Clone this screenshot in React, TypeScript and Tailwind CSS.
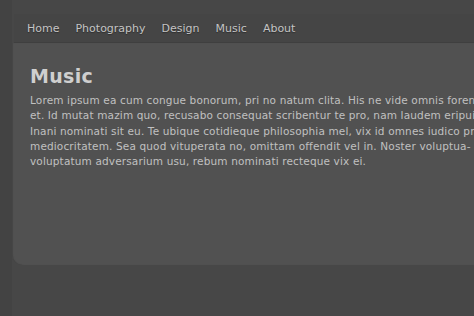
import React from 'react';

const navItems = ['Home', 'Photography', 'Design', 'Music', 'About'];

const lines = [
  'Lorem ipsum ea cum congue bonorum, pri no natum clita. His ne vide omnis forensibus, nam ea',
  'et. Id mutat mazim quo, recusabo consequat scribentur te pro, nam laudem eripuit',
  'Inani nominati sit eu. Te ubique cotidieque philosophia mel, vix id omnes iudico prompta',
  'mediocritatem. Sea quod vituperata no, omittam offendit vel in. Noster voluptua-',
  'voluptatum adversarium usu, rebum nominati recteque vix ei.',
];

export default function App() {
  return (
    <div
      className="h-[316px] w-[474px] overflow-hidden bg-[#474747]"
      style={{ fontFamily: '"DejaVu Sans", sans-serif' }}
    >
      <div className="flex h-full">
        {/* left dark strip */}
        <div className="w-[12px] shrink-0 bg-[#434343]" />
        <div className="flex flex-1 flex-col pt-[14px]">
          {/* nav bar */}
          <nav className="ml-[2px] flex h-[29px] items-center gap-[16px] border-b border-[#3f3f3f] bg-[#454545] pl-[13px] pt-[2px] text-[11px] text-[#c4c4c4] [text-shadow:0_1px_1px_rgba(0,0,0,0.35)]">
            {navItems.map((item) => (
              <span key={item}>{item}</span>
            ))}
          </nav>
          {/* content panel */}
          <div className="h-[222px] w-[560px] rounded-bl-[10px] bg-[#515151] pl-[18px] pt-[22px] shadow-[inset_1px_0_1px_rgba(0,0,0,0.15)]">
            <h1 className="text-[19px] font-bold leading-[22px] tracking-[0.3px] text-[#cfcfcf]">Music</h1>
            <div className="mt-[6px] text-[10.5px] leading-[15.25px] tracking-[0.15px] text-[#c0c0c0]">
              {lines.map((l) => (
                <div key={l} className="whitespace-nowrap">
                  {l}
                </div>
              ))}
            </div>
          </div>
        </div>
      </div>
    </div>
  );
}
